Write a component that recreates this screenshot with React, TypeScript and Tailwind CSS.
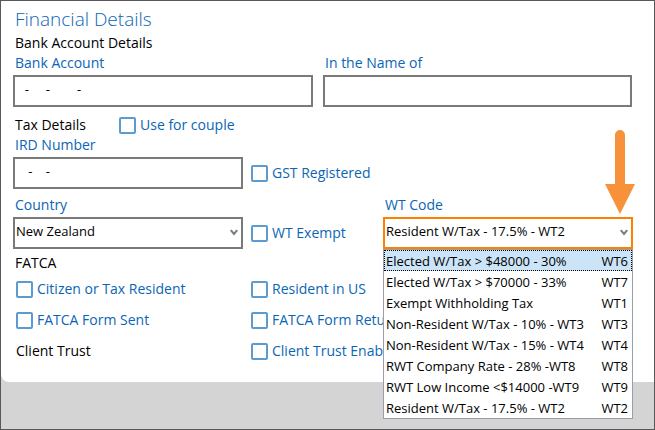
import { useState } from "react";

const blue = "text-[#0a66b5]";

const codes = [
  { name: "Elected W/Tax > $48000 - 30%", code: "WT6" },
  { name: "Elected W/Tax > $70000 - 33%", code: "WT7" },
  { name: "Exempt Withholding Tax", code: "WT1" },
  { name: "Non-Resident W/Tax - 10% - WT3", code: "WT3" },
  { name: "Non-Resident W/Tax - 15% - WT4", code: "WT4" },
  { name: "RWT Company Rate - 28% -WT8", code: "WT8" },
  { name: "RWT Low Income <$14000 -WT9", code: "WT9" },
  { name: "Resident W/Tax - 17.5% - WT2", code: "WT2" },
];

function Chevron() {
  return (
    <svg
      viewBox="0 0 8 7"
      className="pointer-events-none absolute top-3 right-[5px] h-[7px] w-2"
      fill="none"
      stroke="#7a7a7a"
      strokeWidth="2"
      aria-hidden="true"
    >
      <path d="M0.8 1.2 L4 5 L7.2 1.2" />
    </svg>
  );
}

function TextField({ id, label, initial = "" }: { id: string; label: string; initial?: string }) {
  return (
    <div className="flex min-w-0 flex-col gap-0.5">
      <label htmlFor={id} className={`pl-0.5 leading-5 ${blue}`}>
        {label}
      </label>
      <input
        id={id}
        type="text"
        defaultValue={initial}
        className="h-8 w-full border-2 border-[#7a7a7a] bg-white pb-1 pl-[3px] text-[13px] whitespace-pre text-black outline-none"
      />
    </div>
  );
}

function Check({ id, label }: { id: string; label: string }) {
  return (
    <div className="flex h-5 items-center gap-1">
      <input
        id={id}
        type="checkbox"
        className="size-[17px] shrink-0 appearance-none rounded-[2px] border-2 border-[#5b9bd0] bg-white checked:bg-[#5b9bd0]"
      />
      <label htmlFor={id} className={`leading-5 whitespace-nowrap ${blue}`}>
        {label}
      </label>
    </div>
  );
}

export default function App() {
  const [selected, setSelected] = useState("WT2");

  return (
    <div className="min-h-screen overflow-hidden border border-[#58585a] bg-[#d4d4d4] font-['Open_Sans','Noto_Sans',sans-serif] text-[14px] text-black">
      <form className="rounded-bl-lg bg-white pt-1.5 pr-[21px] pb-[21px] pl-3">
        <h1 className={`pb-0.5 pl-0.5 text-[19px] leading-6 font-light ${blue}`}>Financial Details</h1>

        <h2 className="pl-0.5 leading-5">Bank Account Details</h2>
        <div className="grid grid-cols-[300fr_309fr] gap-2.5 pr-px">
          <TextField id="bank" label="Bank Account" initial="  -     -        -" />
          <TextField id="holder" label="In the Name of" />
        </div>

        <div className="mt-2 flex h-5 items-center pl-0.5">
          <h2 className="w-[104px] leading-5">Tax Details</h2>
          <Check id="couple" label="Use for couple" />
        </div>
        <div className="grid grid-cols-[230fr_140fr_250fr] items-end">
          <TextField id="ird" label="IRD Number" initial="   -    -" />
          <div className="flex h-8 items-center pl-2">
            <Check id="gst" label="GST Registered" />
          </div>
        </div>

        <div className="mt-1.5 grid grid-cols-[230fr_140fr_250fr] items-end">
          <div className="flex flex-col gap-0.5">
            <label htmlFor="country" className={`pl-0.5 leading-5 ${blue}`}>
              Country
            </label>
            <div className="relative">
              <select
                id="country"
                className="block h-8 w-full appearance-none border-2 border-[#7a7a7a] bg-white pb-0.5 pl-px text-[13px] outline-none"
              >
                <option>New Zealand</option>
              </select>
              <Chevron />
            </div>
          </div>
          <div className="flex h-8 items-center pl-2">
            <Check id="exempt" label="WT Exempt" />
          </div>
          <div className="relative flex flex-col gap-0.5">
            <label htmlFor="wt" className={`pl-0.5 leading-5 ${blue}`}>
              WT Code
            </label>
            <div className="relative">
              <select
                id="wt"
                value={selected}
                onChange={(e) => setSelected(e.target.value)}
                className="block h-8 w-full appearance-none border-2 border-[#ff8000] bg-white pb-0.5 pl-px text-[13px] outline-none"
              >
                {codes.map((c) => (
                  <option key={c.code} value={c.code}>
                    {c.name}
                  </option>
                ))}
              </select>
              <Chevron />
            </div>
            <svg
              viewBox="0 0 30 84"
              className="absolute -right-0.5 bottom-[35px] h-[84px] w-[30px]"
              fill="#f8923a"
              aria-hidden="true"
            >
              <path d="M10 5 A5 5 0 0 1 20 5 V54 H30 L15 84 L0 54 H10 Z" />
            </svg>
            <ul
              role="listbox"
              aria-label="WT Code"
              className="absolute top-full z-10 w-full border border-[#9a9eab] bg-white text-[13px]"
            >
              {codes.map((c, i) => (
                <li
                  key={c.code}
                  role="option"
                  aria-selected={i === 0}
                  onClick={() => setSelected(c.code)}
                  className={`flex h-[21px] items-center justify-between border border-dotted pr-[3px] pl-px leading-5 whitespace-nowrap ${
                    i === 0 ? "border-black bg-[#cce4f7]" : "border-transparent"
                  }`}
                >
                  <span>{c.name}</span>
                  <span>{c.code}</span>
                </li>
              ))}
            </ul>
          </div>
        </div>

        <h2 className="mt-1 pl-0.5 leading-5">FATCA</h2>
        <div className="mt-1.5 grid grid-cols-[235fr_382fr] gap-y-[11px] pl-[3px]">
          <Check id="citizen" label="Citizen or Tax Resident" />
          <Check id="us" label="Resident in US" />
          <Check id="sent" label="FATCA Form Sent" />
          <Check id="returned" label="FATCA Form Returned" />
          <h2 className="leading-5">Client Trust</h2>
          <Check id="trust" label="Client Trust Enabled" />
        </div>
      </form>
    </div>
  );
}
